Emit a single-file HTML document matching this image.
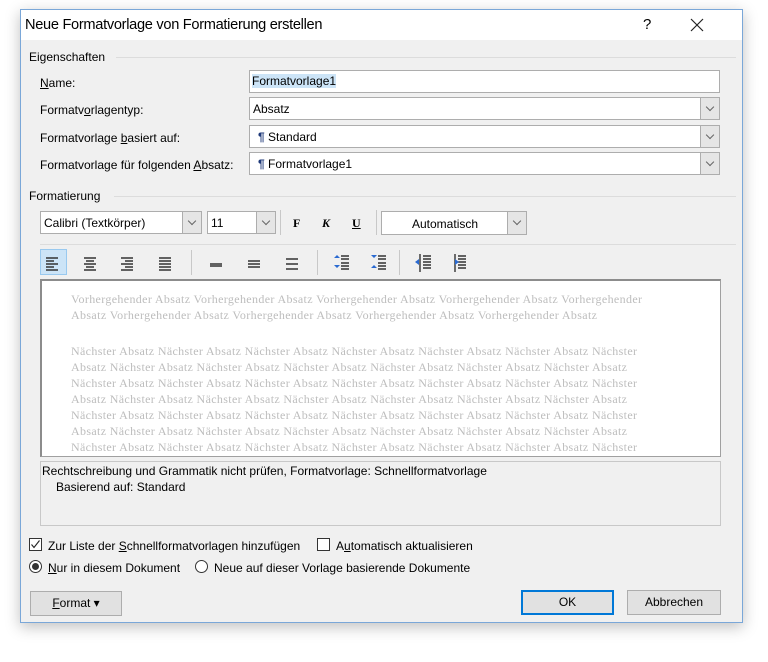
<!DOCTYPE html>
<html><head><meta charset="utf-8"><style>
*{box-sizing:border-box;margin:0;padding:0}
body{width:768px;height:662px;background:#fff;position:relative;font-family:"Liberation Sans",sans-serif;font-size:12px;color:#000;overflow:hidden}
.dlg{position:absolute;left:20px;top:9px;width:723px;height:614px;background:#f0f0f0;border:1px solid #7aa7d8;box-shadow:0 4px 14px rgba(0,0,0,.25)}
.tb{position:absolute;left:0;top:0;width:721px;height:30px;background:#fff}
.a{position:absolute;white-space:nowrap}
.in{position:absolute;background:#fff;border:1px solid #adadad;height:23px}
.dd{position:absolute;right:0;top:0;width:19px;height:21px;background:#e5e5e5;border-left:1px solid #adadad}
.dd:after{content:"";position:absolute;left:6px;top:6px;width:5px;height:5px;border-right:1px solid #666;border-bottom:1px solid #666;transform:rotate(45deg)}
.sep{position:absolute;height:1px;background:#dcdcdc}
.btn{position:absolute;height:25px;background:#e1e1e1;border:1px solid #adadad;text-align:center;line-height:23px}
u{text-decoration:underline}
.vs{position:absolute;width:1px;background:#c8c8c8}
.ic{position:absolute}
</style></head><body>
<div class="dlg">
<div class="tb"></div>
<div class="a" style="left:4px;top:7px;font-size:14.6px;letter-spacing:-.3px">Neue Formatvorlage von Formatierung erstellen</div>
<div class="a" style="left:622px;top:6px;font-size:15px">?</div>
<svg class="ic" style="left:669px;top:8px" width="14" height="14"><path d="M1 1L13 13M13 1L1 13" stroke="#222" stroke-width="1.2"/></svg>

<div class="a" style="left:8px;top:40px">Eigenschaften</div>
<div class="sep" style="left:95px;top:47px;width:620px"></div>
<div class="a" style="left:19px;top:66px"><u>N</u>ame:</div>
<div class="in" style="left:228px;top:60px;width:471px"><span style="position:absolute;left:2px;top:3px;background:#cce4f7">Formatvorlage1</span></div>
<div class="a" style="left:19px;top:93px">Formatv<u>o</u>rlagentyp:</div>
<div class="in" style="left:228px;top:87px;width:471px"><span style="position:absolute;left:3px;top:4px">Absatz</span><div class="dd"></div></div>
<div class="a" style="left:19px;top:121px">Formatvorlage <u>b</u>asiert auf:</div>
<div class="in" style="left:228px;top:115px;width:471px"><span style="position:absolute;left:8px;top:4px"><b style="color:#1f3a7a">¶</b> Standard</span><div class="dd"></div></div>
<div class="a" style="left:19px;top:148px">Formatvorlage für folgenden <u>A</u>bsatz:</div>
<div class="in" style="left:228px;top:142px;width:471px"><span style="position:absolute;left:8px;top:4px"><b style="color:#1f3a7a">¶</b> Formatvorlage1</span><div class="dd"></div></div>

<div class="a" style="left:8px;top:179px">Formatierung</div>
<div class="sep" style="left:93px;top:186px;width:622px"></div>
<div class="in" style="left:19px;top:201px;width:162px"><span style="position:absolute;left:3px;top:4px">Calibri (Textkörper)</span><div class="dd"></div></div>
<div class="in" style="left:186px;top:201px;width:69px"><span style="position:absolute;left:3px;top:4px">11</span><div class="dd"></div></div>
<div class="vs" style="left:259px;top:200px;height:25px"></div>
<div class="a" style="left:272px;top:206px;font-family:'Liberation Serif',serif;font-weight:bold">F</div>
<div class="a" style="left:301px;top:206px;font-family:'Liberation Serif',serif;font-weight:bold;font-style:italic">K</div>
<div class="a" style="left:331px;top:206px;font-family:'Liberation Serif',serif;font-weight:bold;text-decoration:underline">U</div>
<div class="vs" style="left:355px;top:200px;height:25px"></div>
<div class="in" style="left:360px;top:201px;width:146px;height:24px"><span style="position:absolute;left:30px;top:5px">Automatisch</span><div class="dd" style="height:22px"></div></div>
<div class="sep" style="left:19px;top:234px;width:696px"></div>

<div style="position:absolute;left:19px;top:239px;width:27px;height:26px;background:#cce4f7;border:1px solid #99c9ef"></div>
<svg class="ic" style="left:0;top:0" width="723" height="280">
<g stroke="#333" stroke-width="1.4">
<path d="M25 248h12M25 251h8M25 254h12M25 257h8M25 260h12"/>
<path d="M63 248h12M65 251h8M63 254h12M65 257h8M63 260h12"/>
<path d="M100 248h12M104 251h8M100 254h12M104 257h8M100 260h12"/>
<path d="M138 248h12M138 251h12M138 254h12M138 257h12M138 260h12"/>
<path d="M189 254h12M189 256h12"/>
<path d="M227 251h12M227 254h12M227 257h12"/>
<path d="M265 249h12M265 254h12M265 259h12"/>
<path d="M320 246h8M320 249h8M320 253h8M320 256h8M320 259h8"/>
<path d="M357 246h8M357 249h8M357 253h8M357 256h8M357 259h8"/>
<path d="M402 246h8M402 249h8M402 252h8M402 255h8M402 258h8M399 244v18"/>
<path d="M437 246h8M437 249h8M437 252h8M437 255h8M437 258h8M434 244v18"/>
</g>
<g fill="#2a6ad1"><path d="M313 248l3-3 3 3zM313 255l3 3 3-3z"/><path d="M350 245l3 3 3-3zM350 258l3-3 3 3z"/><path d="M394 252l4-3v6z"/><path d="M434 249l4 3-4 3z"/></g>
</svg>
<div class="vs" style="left:170px;top:240px;height:25px"></div>
<div class="vs" style="left:296px;top:240px;height:25px"></div>
<div class="vs" style="left:378px;top:240px;height:25px"></div>

<div style="position:absolute;left:19px;top:269px;width:681px;height:178px;background:#fff;border:1px solid #a0a0a0;border-left:2px solid #8c8c8c;border-top:2px solid #8c8c8c;overflow:hidden">
<svg width="681" height="178" style="position:absolute;left:-2px;top:-2px" font-family="Liberation Serif, serif" font-size="12" fill="#bdbdbd">
<text x="31" y="24" textLength="571">Vorhergehender Absatz Vorhergehender Absatz Vorhergehender Absatz Vorhergehender Absatz Vorhergehender</text>
<text x="31" y="40" textLength="526">Absatz Vorhergehender Absatz Vorhergehender Absatz Vorhergehender Absatz Vorhergehender Absatz</text>
<text x="31" y="76" textLength="566">Nächster Absatz Nächster Absatz Nächster Absatz Nächster Absatz Nächster Absatz Nächster Absatz Nächster</text>
<text x="31" y="92" textLength="556">Absatz Nächster Absatz Nächster Absatz Nächster Absatz Nächster Absatz Nächster Absatz Nächster Absatz</text>
<text x="31" y="108" textLength="566">Nächster Absatz Nächster Absatz Nächster Absatz Nächster Absatz Nächster Absatz Nächster Absatz Nächster</text>
<text x="31" y="124" textLength="556">Absatz Nächster Absatz Nächster Absatz Nächster Absatz Nächster Absatz Nächster Absatz Nächster Absatz</text>
<text x="31" y="140" textLength="566">Nächster Absatz Nächster Absatz Nächster Absatz Nächster Absatz Nächster Absatz Nächster Absatz Nächster</text>
<text x="31" y="156" textLength="556">Absatz Nächster Absatz Nächster Absatz Nächster Absatz Nächster Absatz Nächster Absatz Nächster Absatz</text>
<text x="31" y="172" textLength="566">Nächster Absatz Nächster Absatz Nächster Absatz Nächster Absatz Nächster Absatz Nächster Absatz Nächster</text>
</svg></div>
<div style="position:absolute;left:19px;top:451px;width:681px;height:65px;background:#f0f0f0;border:1px solid #c8c8c8"></div>
<div class="a" style="left:21px;top:454px">Rechtschreibung und Grammatik nicht prüfen, Formatvorlage: Schnellformatvorlage</div>
<div class="a" style="left:35px;top:470px">Basierend auf: Standard</div>

<div style="position:absolute;left:8px;top:528px;width:13px;height:13px;background:#fff;border:1px solid #333"></div>
<svg class="ic" style="left:8px;top:528px" width="13" height="13"><path d="M2.5 6.5L5 9.5L10.5 2.5" stroke="#222" stroke-width="1.1" fill="none"/></svg>
<div class="a" style="left:27px;top:529px">Zur Liste der <u>S</u>chnellformatvorlagen hinzufügen</div>
<div style="position:absolute;left:296px;top:528px;width:13px;height:13px;background:#fff;border:1px solid #333"></div>
<div class="a" style="left:315px;top:529px">A<u>u</u>tomatisch aktualisieren</div>
<div style="position:absolute;left:8px;top:550px;width:13px;height:13px;border-radius:50%;background:#fff;border:1px solid #333"></div>
<div style="position:absolute;left:11px;top:553px;width:7px;height:7px;border-radius:50%;background:#333"></div>
<div class="a" style="left:27px;top:551px"><u>N</u>ur in diesem Dokument</div>
<div style="position:absolute;left:174px;top:550px;width:13px;height:13px;border-radius:50%;background:#fff;border:1px solid #333"></div>
<div class="a" style="left:193px;top:551px">Neue auf dieser Vorlage basierende Dokumente</div>

<div class="btn" style="left:9px;top:581px;width:92px"><u>F</u>ormat ▾</div>
<div class="btn" style="left:500px;top:580px;width:93px;border:2px solid #0078d7;line-height:21px">OK</div>
<div class="btn" style="left:606px;top:580px;width:94px">Abbrechen</div>
</div>
</body></html>
